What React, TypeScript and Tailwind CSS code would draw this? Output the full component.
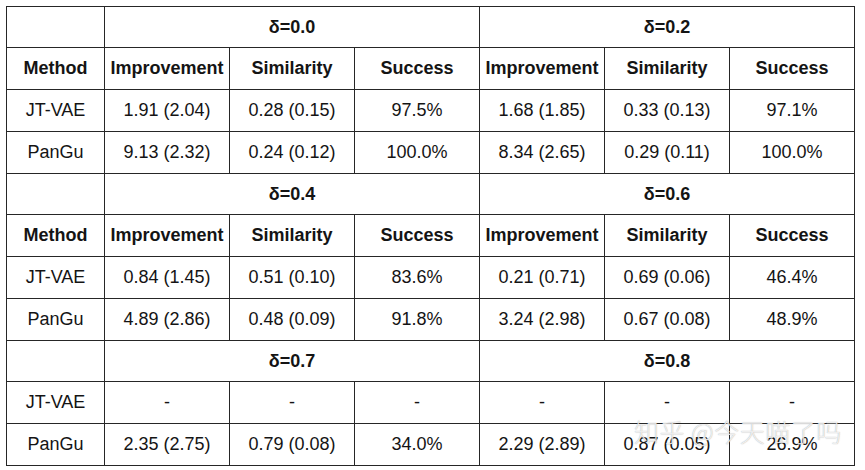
import React from 'react';

type Block = {
  deltas: [string, string];
  showHead: boolean;
  rows: { method: string; cells: string[] }[];
};

const blocks: Block[] = [
  {
    deltas: ['δ=0.0', 'δ=0.2'],
    showHead: true,
    rows: [
      { method: 'JT-VAE', cells: ['1.91 (2.04)', '0.28 (0.15)', '97.5%', '1.68 (1.85)', '0.33 (0.13)', '97.1%'] },
      { method: 'PanGu', cells: ['9.13 (2.32)', '0.24 (0.12)', '100.0%', '8.34 (2.65)', '0.29 (0.11)', '100.0%'] },
    ],
  },
  {
    deltas: ['δ=0.4', 'δ=0.6'],
    showHead: true,
    rows: [
      { method: 'JT-VAE', cells: ['0.84 (1.45)', '0.51 (0.10)', '83.6%', '0.21 (0.71)', '0.69 (0.06)', '46.4%'] },
      { method: 'PanGu', cells: ['4.89 (2.86)', '0.48 (0.09)', '91.8%', '3.24 (2.98)', '0.67 (0.08)', '48.9%'] },
    ],
  },
  {
    deltas: ['δ=0.7', 'δ=0.8'],
    showHead: false,
    rows: [
      { method: 'JT-VAE', cells: ['-', '-', '-', '-', '-', '-'] },
      { method: 'PanGu', cells: ['2.35 (2.75)', '0.79 (0.08)', '34.0%', '2.29 (2.89)', '0.87 (0.05)', '26.9%'] },
    ],
  },
];

const heads = ['Improvement', 'Similarity', 'Success', 'Improvement', 'Similarity', 'Success'];

const cell = 'border border-[#262626] p-0 text-center align-middle';

export default function App() {
  return (
    <div className="relative h-[470px] w-[865px] overflow-hidden bg-white pl-[6px] pt-[6px] font-['Liberation_Sans',Arial,sans-serif] text-[18px] text-[#141414]">
      <table className="w-[848px] table-fixed border-collapse">
        <colgroup>
          <col className="w-[98px]" />
          <col className="w-[125px]" />
          <col className="w-[125px]" />
          <col className="w-[125px]" />
          <col className="w-[125px]" />
          <col className="w-[125px]" />
          <col className="w-[125px]" />
        </colgroup>
        <tbody>
          {blocks.map((b, bi) => (
            <React.Fragment key={bi}>
              <tr className="h-[41px]">
                <td className={cell} />
                <td colSpan={3} className={`${cell} font-bold`}>{b.deltas[0]}</td>
                <td colSpan={3} className={`${cell} font-bold`}>{b.deltas[1]}</td>
              </tr>
              {b.showHead && (
                <tr className="h-[42px]">
                  <td className={`${cell} font-bold`}>Method</td>
                  {heads.map((h, i) => (
                    <td key={i} className={`${cell} font-bold`}>{h}</td>
                  ))}
                </tr>
              )}
              {b.rows.map((r, ri) => (
                <tr key={ri} className="h-[42px]">
                  <td className={cell}>{r.method}</td>
                  {r.cells.map((c, ci) => (
                    <td key={ci} className={cell}>{c}</td>
                  ))}
                </tr>
              ))}
            </React.Fragment>
          ))}
        </tbody>
      </table>

      {/* watermark */}
      <div className="pointer-events-none absolute left-[634px] top-[419px] font-['Noto_Sans_CJK_SC',sans-serif] text-[25px] font-light leading-none tracking-[0.5px] text-white/80 [text-shadow:0_0_1px_rgba(90,90,90,0.6)]">
        知乎 @今天喵了吗
      </div>
    </div>
  );
}
